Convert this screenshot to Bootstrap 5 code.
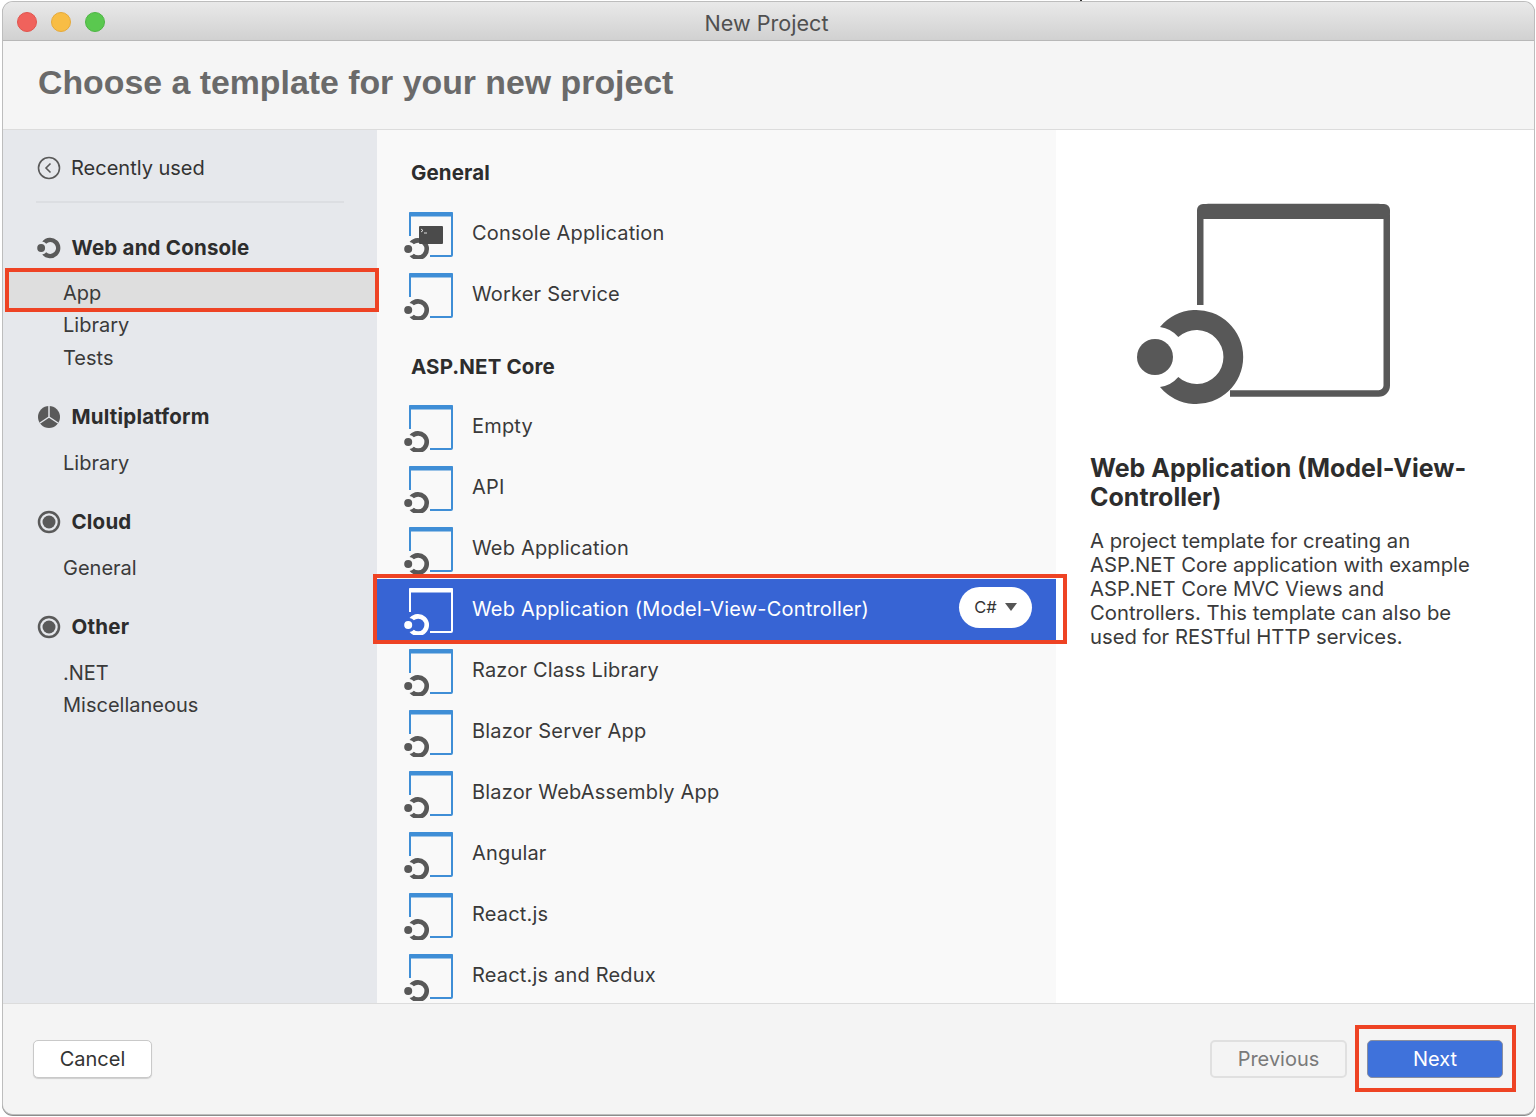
<!DOCTYPE html>
<html lang="en">
<head>
<meta charset="utf-8">
<title>New Project</title>
<link href="https://cdn.jsdelivr.net/npm/bootstrap@5.3.0/dist/css/bootstrap.min.css" rel="stylesheet">
<style>
html,body{height:1117px;overflow:hidden;background:#fff}
body{font-family:Inter,"Liberation Sans",sans-serif;font-size:20px;color:#333;position:relative}
.mac-win{position:absolute;left:3px;top:2px;width:1531px;height:1112px;border-radius:10px;overflow:hidden;box-shadow:0 0 0 1px #bdbdbd,0 1px 0 1px #8c8c8c;background:#f4f4f4}
.tbar{height:39px;background:linear-gradient(#e9e9e9,#d1d1d1);border-bottom:1px solid #b8b8b8;position:relative}
.tlight{width:20px;height:20px;border-radius:50%}
.tl-r{background:#f0625c;border:1px solid #e0544e}.tl-y{background:#f8bd45;border:1px solid #e5a93a}.tl-g{background:#5ac84f;border:1px solid #4db544}
.lights{padding-left:14px;padding-top:10px;gap:14px}
.tname{position:absolute;left:0;right:4px;top:6px;text-align:center;font-size:21.6px;line-height:30px;color:#505050}
.phead{height:89px;background:#f5f5f5;border-bottom:1px solid #dcdcdc;padding:23px 0 0 35px}
.phead h1{font-family:"Liberation Sans",sans-serif;font-weight:700;font-size:33.85px;line-height:36px;color:#6a6a6a;margin:0}
.pbody{height:873px}
.side{width:374px;background:#e6e8ec;padding-top:22px;flex:none}
.lst{width:679px;background:#f9f9f9;flex:none;padding-top:27px;position:relative}
.det{flex:1;background:#fff;padding:65px 60px 0 34px}
.s-row{height:32px;line-height:32px;padding-left:34px;gap:10px;color:#333}
.s-row svg{width:24px;height:24px;flex:none;color:#5a5a5a}
.s-head{gap:10.5px;padding-top:1px;font-weight:700;font-size:20.5px;letter-spacing:.2px;color:#2d2d2d}
.s-gap{margin-top:26.5px}
.s-div{height:2px;background:#dcdee2;margin:17px 33px 28px 33px}
.s-item{height:32.5px;line-height:32.5px;padding-left:60px;color:#3a3a3a}
.s-first{margin-top:14px}
.s-sel{position:relative;background:#dedede;margin:9px 0 0 2px;padding:4.5px 0 0 58px;height:37px}
.s-sel::after,.redbox::after{content:"";position:absolute;border:4px solid #ee4324;pointer-events:none;z-index:5}
.s-sel::after{left:0;right:-2px;top:-4px;bottom:-3px}
.l-head{height:32px;line-height:32px;padding-left:34px;font-weight:700;color:#2d2d2d;font-size:20.5px;letter-spacing:.12px}
.l-row{height:61px;gap:18px;padding-left:27px;color:#3a3a3a;letter-spacing:.18px;position:relative;--win:#3f8ed6;--ring:#585858}
.l-row svg{width:50px;height:50px;flex:none;margin-top:2px}
.l-first{margin-top:13px}
.l-active{background:#3764d4;color:#fff;--win:#fff;--ring:#fff}
.redbox::after{left:-4px;right:-11px;top:-5px;bottom:-4px}
.lang{position:absolute;right:24px;top:8px;width:73px;height:41px;border-radius:21px;background:#fff;color:#333;font-size:16.5px;letter-spacing:0;gap:8px}
.lang i{display:block;width:0;height:0;border:6.5px solid transparent;border-top:8px solid #555;border-bottom:0}
.big-ic{width:270px;height:215px;margin:0 0 44px 40px;display:block;color:#585858}
.det h2{font-family:Inter,sans-serif;font-weight:700;font-size:25px;line-height:29px;color:#2d2d2d;margin:0 0 17px}
.det p{font-size:20.25px;line-height:24px;color:#3a3a3a;margin:0}
.pfoot{height:111px;background:#f4f4f4;border-top:1px solid #dcdcdc;position:relative;z-index:2;padding:36px 31px 0 30px}
.mbtn{height:38px;padding:0;font-size:20px;line-height:36px;border-radius:5px}
.m-cancel{width:119px;background:#fff;border:1px solid #c9c9c9;box-shadow:0 1px 1px #cfcfcf;color:#333}
.m-prev{width:137px;background:#f4f4f4;border:2px solid #e0e0e0;color:#7a7a7a;line-height:34px}
.m-next{width:136px;background:#3f72db;border:1px solid #8a8fa0;color:#fff;position:relative}
.m-next:hover{background:#3f72db;color:#fff}
.m-next::after{content:"";position:absolute;left:-13px;right:-14px;top:-16px;bottom:-15px;border:4px solid #ee4324;z-index:5}
.foot-gap{gap:20px}
.tick{position:absolute;left:1080px;top:0;width:2px;height:3px;background:#333}
</style>
</head>
<body>
<svg width="0" height="0" class="position-absolute">
<defs>
<symbol id="ring" viewBox="-60 -50 110 100"><path fill="currentColor" d="M-36-30A47 47 0 1 1-36 30A29 29 0 0 0-17.7 20A27 27 0 1 0-17.7-20A29 29 0 0 0-36-30Z"/><circle cx="-41" cy="0" r="18" fill="currentColor"/></symbol>
<symbol id="tpl" viewBox="0 0 50 50"><path d="M6 27V5a1 1 0 0 1 1-1h40a1 1 0 0 1 1 1v41a1 1 0 0 1-1 1H26" fill="none" stroke="var(--win)" stroke-width="2"/><rect x="5" y="3" width="44" height="4.5" rx="1" fill="var(--win)"/><g fill="var(--ring)"><path transform="translate(14 40) scale(.234)" d="M-36-30A47 47 0 1 1-36 30A29 29 0 0 0-17.7 20A27 27 0 1 0-17.7-20A29 29 0 0 0-36-30Z"/><circle cx="4.2" cy="40" r="4"/></g></symbol>
</defs>
</svg>
<div class="tick"></div>
<div class="mac-win d-flex flex-column">
  <div class="tbar">
    <div class="lights d-flex"><span class="tlight tl-r"></span><span class="tlight tl-y"></span><span class="tlight tl-g"></span></div>
    <div class="tname">New Project</div>
  </div>
  <div class="phead"><h1>Choose a template for your new project</h1></div>
  <div class="pbody d-flex">
    <div class="side">
      <div class="s-row d-flex align-items-center"><svg viewBox="0 0 24 24"><circle cx="12" cy="12" r="10.5" fill="none" stroke="currentColor" stroke-width="1.6"/><path d="M13.5 7.5 9 12l4.5 4.5" fill="none" stroke="currentColor" stroke-width="1.6"/></svg><span>Recently used</span></div>
      <div class="s-div"></div>
      <div class="s-row s-head d-flex align-items-center"><svg><use href="#ring"/></svg><span>Web and Console</span></div>
      <div class="s-item s-sel">App</div>
      <div class="s-item">Library</div>
      <div class="s-item">Tests</div>
      <div class="s-row s-head s-gap d-flex align-items-center"><svg viewBox="0 0 24 24"><circle cx="12" cy="12" r="11" fill="currentColor"/><path d="M12 1v11M12 12 3 18M12 12l9 6" stroke="#e6e8ec" stroke-width="1.5" fill="none"/></svg><span>Multiplatform</span></div>
      <div class="s-item s-first">Library</div>
      <div class="s-row s-head s-gap d-flex align-items-center"><svg viewBox="0 0 24 24"><circle cx="12" cy="12" r="10" fill="none" stroke="currentColor" stroke-width="2.5"/><circle cx="12" cy="12" r="6.5" fill="currentColor"/></svg><span>Cloud</span></div>
      <div class="s-item s-first">General</div>
      <div class="s-row s-head s-gap d-flex align-items-center"><svg viewBox="0 0 24 24"><circle cx="12" cy="12" r="10" fill="none" stroke="currentColor" stroke-width="2.5"/><circle cx="12" cy="12" r="6.5" fill="currentColor"/></svg><span>Other</span></div>
      <div class="s-item s-first">.NET</div>
      <div class="s-item">Miscellaneous</div>
    </div>
    <div class="lst">
      <div class="l-head">General</div>
      <div class="l-row l-first d-flex align-items-center"><svg><use href="#tpl"/><rect x="15" y="17" width="24" height="18" rx="1" fill="#4b4b4b"/><path d="M17 20l2 1.5-2 1.5M20 24h3" stroke="#fff" stroke-width=".8" fill="none"/></svg><span>Console Application</span></div>
      <div class="l-row d-flex align-items-center"><svg><use href="#tpl"/></svg><span>Worker Service</span></div>
      <div class="l-head s-gap">ASP.NET Core</div>
      <div class="l-row l-first d-flex align-items-center"><svg><use href="#tpl"/></svg><span>Empty</span></div>
      <div class="l-row d-flex align-items-center"><svg><use href="#tpl"/></svg><span>API</span></div>
      <div class="l-row d-flex align-items-center"><svg><use href="#tpl"/></svg><span>Web Application</span></div>
      <div class="l-row l-active redbox d-flex align-items-center"><svg><use href="#tpl"/></svg><span>Web Application (Model-View-Controller)</span><div class="lang d-flex align-items-center justify-content-center"><span>C#</span><i></i></div></div>
      <div class="l-row d-flex align-items-center"><svg><use href="#tpl"/></svg><span>Razor Class Library</span></div>
      <div class="l-row d-flex align-items-center"><svg><use href="#tpl"/></svg><span>Blazor Server App</span></div>
      <div class="l-row d-flex align-items-center"><svg><use href="#tpl"/></svg><span>Blazor WebAssembly App</span></div>
      <div class="l-row d-flex align-items-center"><svg><use href="#tpl"/></svg><span>Angular</span></div>
      <div class="l-row d-flex align-items-center"><svg><use href="#tpl"/></svg><span>React.js</span></div>
      <div class="l-row d-flex align-items-center"><svg><use href="#tpl"/></svg><span>React.js and Redux</span></div>
    </div>
    <div class="det">
      <svg class="big-ic" viewBox="0 0 270 215"><path d="M70.25 110V20a8 8 0 0 1 8-8h170a8.5 8.500 0 0 1 8.500 8.500v170a8 8 0 0 1-8 8H100" fill="none" stroke="currentColor" stroke-width="6.5"/><rect x="67" y="9" width="193" height="15" rx="6" fill="currentColor"/><use href="#ring" x="-60" y="-50" width="110" height="100" transform="translate(66 162)"/></svg>
      <h2>Web Application (Model-View-Controller)</h2>
      <p>A project template for creating an ASP.NET Core application with example ASP.NET Core MVC Views and Controllers. This template can also be used for RESTful HTTP services.</p>
    </div>
  </div>
  <div class="pfoot d-flex justify-content-between">
    <button class="btn mbtn m-cancel" type="button">Cancel</button>
    <div class="d-flex foot-gap"><button class="btn mbtn m-prev" type="button">Previous</button><button class="btn mbtn m-next" type="button">Next</button></div>
  </div>
</div>
</body>
</html>
